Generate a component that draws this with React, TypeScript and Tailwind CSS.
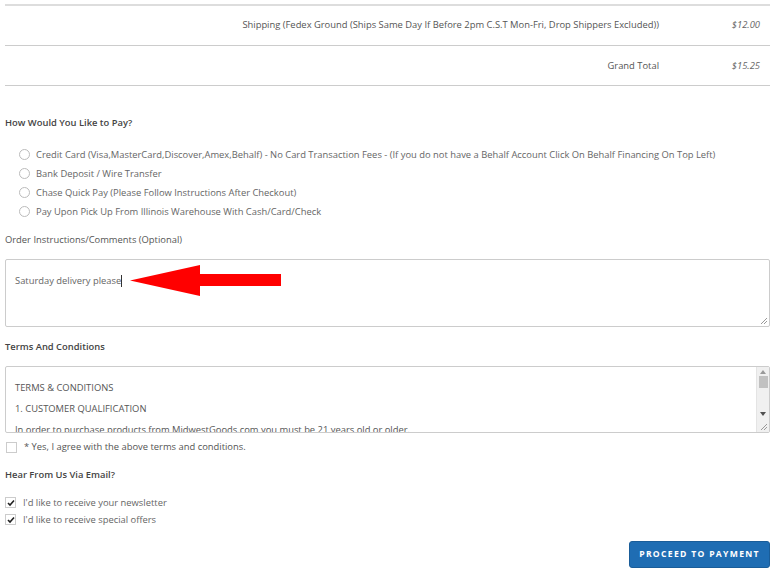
import React from "react";

const font = { fontFamily: '"Open Sans", "Liberation Sans", sans-serif' };

function Grip() {
  return (
    <svg className="absolute right-[1px] bottom-[1px]" width="8" height="8" viewBox="0 0 8 8">
      <path d="M7 1 L1 7 M7 4 L4 7" stroke="#999" strokeWidth="1" />
    </svg>
  );
}

function Radio({ label }: { label: string }) {
  return (
    <div className="flex items-center h-[19px]">
      <span className="ml-[14px] w-[11px] h-[11px] rounded-full border border-[#bbb] bg-white" />
      <span className="ml-[6px]">{label}</span>
    </div>
  );
}

function Check({ label, checked }: { label: string; checked: boolean }) {
  return (
    <div className="flex items-center h-[17px]">
      <span className="w-[11px] h-[11px] border border-[#ccc] bg-white flex items-center justify-center">
        {checked && (
          <svg width="8" height="8" viewBox="0 0 8 8">
            <path d="M1 4 L3 6 L7 1.5" stroke="#222" strokeWidth="1.6" fill="none" />
          </svg>
        )}
      </span>
      <span className="ml-[7px]">{label}</span>
    </div>
  );
}

export default function App() {
  return (
    <div className="w-[777px] h-[574px] bg-white text-[9.4px] text-[#666] overflow-hidden" style={font}>
      <div className="pl-[5px] pr-[7px] pt-[4px]">
        <div className="border-t-2 border-[#ddd]" />
        <div className="flex items-center justify-end h-[40px] border-b border-[#ccc]">
          <span className="text-[#555]">
            Shipping (Fedex Ground (Ships Same Day If Before 2pm C.S.T Mon-Fri, Drop Shippers Excluded))
          </span>
          <span className="w-[111px] pr-[10px] text-right italic">$12.00</span>
        </div>
        <div className="flex items-center justify-end h-[40px] pt-[2px] border-b border-[#ccc]">
          <span className="text-[#555]">Grand Total</span>
          <span className="w-[111px] pr-[10px] text-right italic">$15.25</span>
        </div>

        <div className="mt-[30px] text-[#444] font-semibold">How Would You Like to Pay?</div>
        <div className="mt-[15px]">
          <Radio label="Credit Card (Visa,MasterCard,Discover,Amex,Behalf) - No Card Transaction Fees - (If you do not have a Behalf Account Click On Behalf Financing On Top Left)" />
          <Radio label="Bank Deposit / Wire Transfer" />
          <Radio label="Chase Quick Pay (Please Follow Instructions After Checkout)" />
          <Radio label="Pay Upon Pick Up From Illinois Warehouse With Cash/Card/Check" />
        </div>

        <div className="mt-[12px] text-[#555]">Order Instructions/Comments (Optional)</div>
        <div className="relative mt-[12px] h-[68px] border border-[#ccc] rounded-[2px] bg-white">
          <div className="pt-[14px] pl-[9px] flex items-center">
            <span>Saturday delivery please</span>
            <span className="w-px h-[12px] bg-[#333]" />
          </div>
          <svg className="absolute left-[120px] top-[5px]" width="156" height="31" viewBox="0 0 156 31">
            <path d="M4 15.5 L74 0 L74 9 L155 9 L155 21 L74 21 L74 31 Z" fill="#f00" />
          </svg>
          <Grip />
        </div>

        <div className="mt-[13px] text-[#444] font-semibold">Terms And Conditions</div>
        <div className="relative mt-[12px] h-[67px] border border-[#ccc] rounded-[2px] bg-white overflow-hidden flex">
          <div className="flex-1 pl-[9px] pt-[10px] leading-[21px] text-[#555]">
            <div>TERMS &amp; CONDITIONS</div>
            <div>1. CUSTOMER QUALIFICATION</div>
            <div className="whitespace-nowrap">
              In order to purchase products from MidwestGoods.com you must be 21 years old or older.
            </div>
          </div>
          <div className="w-[13px] bg-[#f0f0f0] border-l border-[#e4e4e4] flex flex-col items-center">
            <svg className="mt-[3px]" width="6" height="4" viewBox="0 0 6 4">
              <path d="M0 4 L3 0 L6 4 Z" fill="#999" />
            </svg>
            <div className="mt-[2px] w-[9px] h-[12px] bg-[#c1c1c1]" />
            <div className="flex-1" />
            <svg className="mb-[16px]" width="6" height="4" viewBox="0 0 6 4">
              <path d="M0 0 L6 0 L3 4 Z" fill="#505050" />
            </svg>
          </div>
          <Grip />
        </div>
        <div className="mt-[8px] flex items-center h-[12px]">
          <span className="ml-[1px] w-[11px] h-[11px] border border-[#ccc] bg-white" />
          <span className="ml-[7px] text-[#555]">* Yes, I agree with the above terms and conditions.</span>
        </div>

        <div className="mt-[15px] text-[#444] font-semibold">Hear From Us Via Email?</div>
        <div className="mt-[12px]">
          <Check label="I'd like to receive your newsletter" checked />
          <Check label="I'd like to receive special offers" checked />
        </div>

        <div className="flex justify-end mt-[13px]">
          <button className="w-[141px] h-[27px] bg-[#1f6db3] rounded-[3px] border border-[#1a5d99] text-white text-[8.6px] font-bold tracking-[1.3px]">
            PROCEED TO PAYMENT
          </button>
        </div>
      </div>
    </div>
  );
}
